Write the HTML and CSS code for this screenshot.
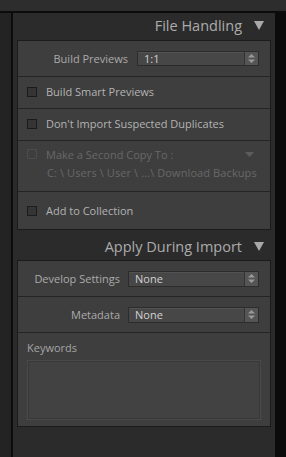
FILE: index.html
```html
<!DOCTYPE html>
<html lang="en">
<head>
    <meta charset="UTF-8">
    <meta name="viewport" content="width=device-width, initial-scale=1.0">
    <title>Import</title>
    <link rel="stylesheet" href="styles.css">
</head>
<body>
    <div class="topbar"></div>
    <div class="main">
        <div class="left-strip"></div>
        <div class="panel">
            <div class="section-head head-1">
                <span>File Handling</span>
                <svg class="tri" width="10" height="9" viewBox="0 0 10 9"><polygon points="0,0 10,0 5,9" fill="#a9a9a9"/></svg>
            </div>
            <div class="box">
                <div class="row row-select r1">
                    <span class="label">Build Previews</span>
                    <div class="select sel-1">
                        <span class="value">1:1</span>
                        <span class="stepper">
                            <svg width="7" height="9" viewBox="0 0 7 9"><polygon points="3.5,0 7,3.5 0,3.5" fill="#9a9a9a"/><polygon points="0,5.5 7,5.5 3.5,9" fill="#9a9a9a"/></svg>
                        </span>
                    </div>
                </div>
                <div class="row row-check r2">
                    <span class="check"></span>
                    <span>Build Smart Previews</span>
                </div>
                <div class="row row-check r3">
                    <span class="check"></span>
                    <span>Don't Import Suspected Duplicates</span>
                </div>
                <div class="row row-copy disabled">
                    <div class="copy-line">
                        <span class="check"></span>
                        <span>Make a Second Copy To :</span>
                        <svg class="drop" width="9" height="5" viewBox="0 0 9 5"><polygon points="0,0 9,0 4.5,5" fill="#5c5c5c"/></svg>
                    </div>
                    <div class="path">C: \ Users \ User \ ...\ Download Backups</div>
                </div>
                <div class="row row-check r5">
                    <span class="check"></span>
                    <span>Add to Collection</span>
                </div>
            </div>

            <div class="section-head head-2">
                <span>Apply During Import</span>
                <svg class="tri" width="10" height="9" viewBox="0 0 10 9"><polygon points="0,0 10,0 5,9" fill="#a9a9a9"/></svg>
            </div>
            <div class="box">
                <div class="row row-select r1 wide">
                    <span class="label">Develop Settings</span>
                    <div class="select sel-2">
                        <span class="value">None</span>
                        <span class="stepper">
                            <svg width="7" height="9" viewBox="0 0 7 9"><polygon points="3.5,0 7,3.5 0,3.5" fill="#9a9a9a"/><polygon points="0,5.5 7,5.5 3.5,9" fill="#9a9a9a"/></svg>
                        </span>
                    </div>
                </div>
                <div class="row row-select r-meta wide">
                    <span class="label">Metadata</span>
                    <div class="select sel-2">
                        <span class="value">None</span>
                        <span class="stepper">
                            <svg width="7" height="9" viewBox="0 0 7 9"><polygon points="3.5,0 7,3.5 0,3.5" fill="#9a9a9a"/><polygon points="0,5.5 7,5.5 3.5,9" fill="#9a9a9a"/></svg>
                        </span>
                    </div>
                </div>
                <div class="row row-keywords">
                    <div class="kw-label">Keywords</div>
                    <div class="kw-area"></div>
                </div>
            </div>
        </div>
        <div class="right-strip"></div>
    </div>
</body>
</html>
```

FILE: styles.css
```css
body {
    margin: 0;
    padding: 0;
    width: 286px;
    height: 457px;
    overflow: hidden;
    background: #2b2b2b;
    font-family: "Open Sans", "Noto Sans", sans-serif;
    color: #b3b3b3;
}

.topbar {
    height: 11px;
    background: #2d2d2d;
    border-bottom: 2px solid #0c0c0c;
}

.main {
    display: flex;
    height: 444px;
}

.left-strip {
    width: 11px;
    background: #232323;
    border-right: 2px solid #0c0c0c;
}

.right-strip {
    width: 11px;
    background: #0b0b0b;
}

.panel {
    flex: 1;
    background: #2b2b2b;
    padding: 0 4px;
}

/* Section headers */
.section-head {
    display: flex;
    justify-content: flex-end;
    align-items: flex-end;
    gap: 12px;
    padding-right: 7px;
    color: #ababab;
    font-size: 14.5px;
    box-sizing: border-box;
}

.head-1 {
    height: 27px;
    padding-bottom: 4px;
}

.head-2 {
    height: 30px;
    padding-bottom: 3px;
}

.section-head span {
    line-height: 20px;
}

.section-head .tri {
    margin-bottom: 6px;
}

/* Boxes */
.box {
    border: 1px solid #1b1b1b;
    background: #3e3e3e;
}

.row {
    border-top: 1px solid #242424;
    box-sizing: border-box;
    font-size: 11px;
}

.row:first-child {
    border-top: none;
}

.row-select {
    display: flex;
    align-items: center;
    justify-content: flex-end;
    gap: 9px;
    padding-right: 11px;
    height: 36px;
}

.row-select.r1 {
    height: 35px;
}

.wide {
    gap: 8px;
}

.label {
    color: #ababab;
}

.select {
    display: flex;
    align-items: stretch;
    height: 15px;
    background: #474747;
    border: 1px solid #2c2c2c;
    box-sizing: border-box;
    box-shadow: inset 0 1px 0 #525252;
}

.sel-1 {
    width: 122px;
}

.sel-2 {
    width: 131px;
    height: 16px;
}

.select .value {
    flex: 1;
    padding-left: 6px;
    color: #d2d2d2;
    font-size: 11px;
    line-height: 13px;
}

.sel-2 .value {
    line-height: 14px;
}

.stepper {
    width: 13px;
    display: flex;
    align-items: center;
    justify-content: center;
    background: #555;
    border-left: 1px solid #333;
}

.row-check {
    display: flex;
    align-items: center;
    gap: 9px;
    padding-left: 9px;
    height: 32px;
}

.row-check.r2,
.row-check.r3 {
    padding-bottom: 2px;
}

.row-check.r5 {
    height: 38px;
}

.check {
    width: 10px;
    height: 10px;
    box-sizing: border-box;
    border: 1px solid #1c1c1c;
    background: #353535;
    flex-shrink: 0;
}

.row-copy {
    height: 51px;
    padding-left: 9px;
    padding-top: 4px;
    color: #686868;
}

.copy-line {
    display: flex;
    align-items: center;
    gap: 9px;
    height: 18px;
}

.disabled .check {
    border-color: #4c4c4c;
    background: #3e3e3e;
}

.copy-line .drop {
    margin-left: auto;
    margin-right: 16px;
}

.path {
    padding-left: 20px;
    margin-top: 2px;
    line-height: 16px;
    letter-spacing: 0.1px;
}

.row-keywords {
    height: 94px;
    padding: 7px 9px 0 9px;
}

.kw-label {
    color: #a5a5a5;
    line-height: 16px;
}

.kw-area {
    margin-top: 4px;
    height: 58px;
    background: #424242;
    border: 1px solid #4a4a4a;
    box-shadow: inset 0 0 0 1px #383838;
}
```
